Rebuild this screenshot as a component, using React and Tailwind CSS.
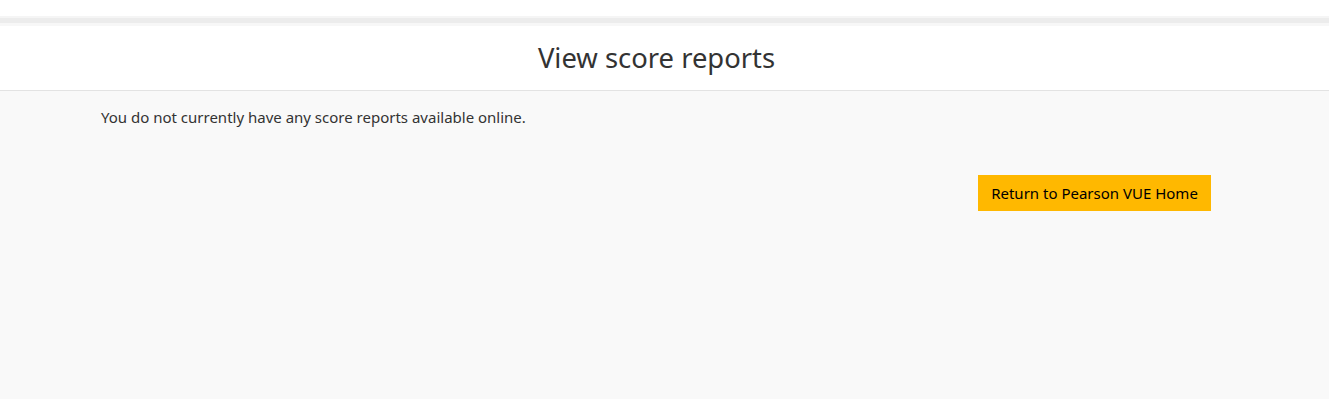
export default function App() {
  return (
    <div className="min-h-[399px] bg-[#f9f9f9] font-['Noto_Sans',sans-serif] text-[#333]">
      <div className="bg-white">
        <div className="h-4" />
        <div className="h-[2px] bg-[#f5f5f5]" />
        <div className="h-[5px] bg-[#ececec]" />
        <div className="h-[3px] bg-[#f7f7f7]" />
        <div className="flex h-[65px] items-center justify-center border-b border-[#e3e3e3] pr-[16px]">
          <h1 className="text-[27.4px] leading-none">View score reports</h1>
        </div>
      </div>
      <div className="px-[101px] pt-[15px]">
        <p className="text-[15px] leading-[22px]">
          You do not currently have any score reports available online.
        </p>
        <div className="mt-[47px] flex justify-end pr-[17px]">
          <button className="h-[36px] w-[233px] bg-[#ffb800] text-[15px] text-black">
            Return to Pearson VUE Home
          </button>
        </div>
      </div>
    </div>
  );
}
